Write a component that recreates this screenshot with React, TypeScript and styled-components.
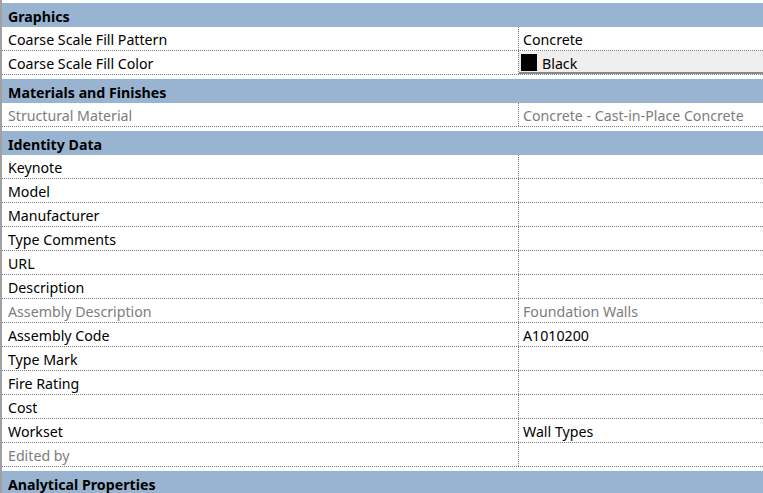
import React, { FC } from 'react';
import styled, { createGlobalStyle } from 'styled-components';

const GlobalStyle = createGlobalStyle`
  html, body {
    margin: 0;
    padding: 0;
    background: #ffffff;
  }
  body {
    font-family: "Noto Sans", "Open Sans", sans-serif;
    font-size: 14.2px;
    color: #000000;
  }
`;

const Palette = styled.div`
  width: 763px;
  height: 493px;
  overflow: hidden;
  border-left: 2px solid #a0a0a0;
  box-sizing: border-box;
  padding-top: 3px;
`;

const Group = styled.div`
  & + & {
    margin-top: 4px;
  }
`;

const Header = styled.div`
  height: 24px;
  box-sizing: border-box;
  display: flex;
  align-items: center;
  padding: 2px 0 0 6px;
  background: #99b4d1;
  font-weight: 700;
`;

const Row = styled.div`
  display: grid;
  grid-template-columns: 516px 1fr;
  height: 24px;
  box-sizing: border-box;
  border-bottom: 1px dotted #7a7a7a;
`;

const Cell = styled.div<{ $muted?: boolean; $value?: boolean }>`
  display: flex;
  align-items: center;
  padding-top: 2px;
  padding-left: ${(p) => (p.$value ? '4px' : '6px')};
  border-left: ${(p) => (p.$value ? '1px dotted #7a7a7a' : 'none')};
  color: ${(p) => (p.$muted ? '#7d7d7d' : '#000000')};
  white-space: nowrap;
  overflow: hidden;
`;

const ColorCell = styled(Cell)`
  background: #efefef;
  padding-left: 2px;
  gap: 5px;
  box-shadow: inset 0 -2px 0 #8a8a8a;
`;

const Swatch = styled.span`
  width: 16px;
  height: 17px;
  margin-top: -2px;
  background: #000000;
  flex: none;
`;

interface Param {
  label: string;
  value?: string;
  muted?: boolean;
  swatch?: boolean;
}

interface Section {
  title: string;
  params: Param[];
}

const sections: Section[] = [
  {
    title: 'Graphics',
    params: [
      { label: 'Coarse Scale Fill Pattern', value: 'Concrete' },
      { label: 'Coarse Scale Fill Color', value: 'Black', swatch: true },
    ],
  },
  {
    title: 'Materials and Finishes',
    params: [{ label: 'Structural Material', value: 'Concrete - Cast-in-Place Concrete', muted: true }],
  },
  {
    title: 'Identity Data',
    params: [
      { label: 'Keynote' },
      { label: 'Model' },
      { label: 'Manufacturer' },
      { label: 'Type Comments' },
      { label: 'URL' },
      { label: 'Description' },
      { label: 'Assembly Description', value: 'Foundation Walls', muted: true },
      { label: 'Assembly Code', value: 'A1010200' },
      { label: 'Type Mark' },
      { label: 'Fire Rating' },
      { label: 'Cost' },
      { label: 'Workset', value: 'Wall Types' },
      { label: 'Edited by', muted: true },
    ],
  },
  {
    title: 'Analytical Properties',
    params: [],
  },
];

const App: FC = () => {
  return (
    <>
      <GlobalStyle />
      <Palette>
        {sections.map((s) => (
          <Group key={s.title}>
            <Header>{s.title}</Header>
            {s.params.map((p) => (
              <Row key={p.label}>
                <Cell $muted={p.muted}>{p.label}</Cell>
                {p.swatch ? (
                  <ColorCell $value>
                    <Swatch />
                    {p.value}
                  </ColorCell>
                ) : (
                  <Cell $value $muted={p.muted}>{p.value}</Cell>
                )}
              </Row>
            ))}
          </Group>
        ))}
      </Palette>
    </>
  );
};

export default App;
